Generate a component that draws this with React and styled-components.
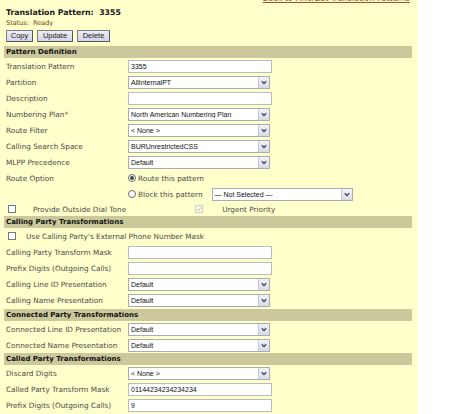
import React from 'react';
import styled, { createGlobalStyle } from 'styled-components';

const GlobalStyle = createGlobalStyle`
  body {
    margin: 0;
    background: #ffffff;
    font-family: 'DejaVu Sans', Verdana, sans-serif;
  }
`;

const Page = styled.div`
  width: 418px;
  height: 414px;
  overflow: hidden;
  background: #ffffcc;
`;

const TopLink = styled.div`
  display: flex;
  justify-content: flex-end;
  padding-right: 8px;
  margin-top: -6px;
  height: 13px;
  a {
    font-size: 8px;
    color: #a0522d;
    text-decoration: underline;
  }
`;

const Title = styled.div`
  padding-left: 6px;
  font-size: 7.8px;
  font-weight: bold;
  color: #1a1a1a;
  height: 11px;
  line-height: 11px;
`;

const Status = styled.div`
  padding-left: 6px;
  font-size: 6.5px;
  color: #6b4a10;
  height: 10px;
  line-height: 10px;
`;

const Toolbar = styled.div`
  display: flex;
  gap: 4px;
  padding: 2px 6px 0;
  height: 14px;
`;

const Button = styled.button`
  height: 12px;
  padding: 0 3px;
  font-family: 'Liberation Sans', Arial, sans-serif;
  font-size: 7.5px;
  color: #222;
  background: linear-gradient(#eeeef6, #d4d4e6);
  border: 1px solid #7d7d8a;
  border-right-color: #55556a;
  border-bottom-color: #55556a;
  border-radius: 1px;
  line-height: 10px;
  width: ${p => p.$w}px;
`;

const SectionHeader = styled.div`
  margin: ${p => p.$mt || 0}px 6px 0 4px;
  height: 12px;
  line-height: 12px;
  padding-left: 2px;
  background: #cbc99c;
  font-size: 7px;
  font-weight: bold;
  color: #111;
`;

const Row = styled.div`
  display: grid;
  grid-template-columns: 122px auto;
  align-items: center;
  height: ${p => p.$h || 16}px;
  padding-left: 6px;
`;

const Label = styled.span`
  font-size: 7.3px;
  color: #4a4a4a;
  white-space: nowrap;
`;

const TextBox = styled.div`
  box-sizing: border-box;
  width: 144px;
  height: 13px;
  background: #fff;
  border: 1px solid #b8bcc0;
  font-family: 'Liberation Sans', Arial, sans-serif;
  font-size: 7px;
  line-height: 11px;
  padding-left: 2px;
  color: #111;
`;

const SelectBox = styled.div`
  box-sizing: border-box;
  width: ${p => p.$w || 142}px;
  height: 13px;
  background: #fff;
  border: 1px solid #a8acb4;
  display: flex;
  align-items: center;
  font-family: 'Liberation Sans', Arial, sans-serif;
  font-size: 7px;
  color: #111;
`;

const SelectText = styled.span`
  flex: 1;
  padding-left: 2px;
  white-space: nowrap;
  overflow: hidden;
`;

const Arrow = styled.span`
  width: 10px;
  height: 11px;
  background: linear-gradient(#f2f2f8, #d8dae6);
  border-left: 1px solid #c4c6d0;
  display: flex;
  align-items: center;
  justify-content: center;
`;

const RadioLine = styled.div`
  display: flex;
  align-items: center;
  gap: 9px;
`;

const RadioLabel = styled.label`
  display: flex;
  align-items: center;
  gap: 2px;
  font-size: 7.3px;
  color: #4a4a4a;
`;

const Radio = styled.span`
  box-sizing: border-box;
  width: 8px;
  height: 8px;
  border-radius: 50%;
  border: 1px solid #6a6a6a;
  background: #fff;
  display: flex;
  align-items: center;
  justify-content: center;
  &::after {
    content: '';
    width: 4px;
    height: 4px;
    border-radius: 50%;
    background: ${p => (p.$on ? '#3c4a3c' : 'transparent')};
  }
`;

const CheckRow = styled.div`
  display: flex;
  align-items: center;
  height: ${p => p.$h || 16}px;
  padding-left: 8px;
`;

const Check = styled.span`
  box-sizing: border-box;
  width: 8px;
  height: 8px;
  border: 1px solid ${p => (p.$disabled ? '#d0d0c0' : '#6f7a86')};
  background: ${p => (p.$disabled ? '#f7f7ea' : '#fff')};
  display: flex;
  align-items: center;
  justify-content: center;
  margin-left: ${p => p.$ml || 0}px;
`;

const CheckText = styled.span`
  font-size: 7.3px;
  color: #4a4a4a;
  margin-left: ${p => p.$ml}px;
  white-space: nowrap;
`;

const Chevron = () => (
  <svg width="6" height="5" viewBox="0 0 6 5">
    <path d="M0.8 1.2 L3 3.6 L5.2 1.2" fill="none" stroke="#3a3f58" strokeWidth="1.3" />
  </svg>
);

const Tick = () => (
  <svg width="6" height="6" viewBox="0 0 6 6">
    <path d="M1 3 L2.5 4.5 L5 1.2" fill="none" stroke="#c0c0b0" strokeWidth="1" />
  </svg>
);

const Select = ({ value, w }) => (
  <SelectBox $w={w}>
    <SelectText>{value}</SelectText>
    <Arrow><Chevron /></Arrow>
  </SelectBox>
);

const Field = ({ label, children, h }) => (
  <Row $h={h}>
    <Label>{label}</Label>
    <div>{children}</div>
  </Row>
);

const App = () => (
  <Page>
    <GlobalStyle />
    <TopLink><a href="#">Back to Find/List Translation Patterns</a></TopLink>
    <Title>Translation Pattern:&nbsp; 3355</Title>
    <Status>Status:&nbsp; Ready</Status>
    <Toolbar>
      <Button $w={27}>Copy</Button>
      <Button $w={36}>Update</Button>
      <Button $w={33}>Delete</Button>
    </Toolbar>

    <SectionHeader $mt={2}>Pattern Definition</SectionHeader>
    <Field label="Translation Pattern"><TextBox>3355</TextBox></Field>
    <Field label="Partition"><Select value="AllInternalPT" /></Field>
    <Field label="Description"><TextBox /></Field>
    <Field label="Numbering Plan*"><Select value="North American Numbering Plan" /></Field>
    <Field label="Route Filter"><Select value="< None >" /></Field>
    <Field label="Calling Search Space"><Select value="BURUnrestrictedCSS" /></Field>
    <Field label="MLPP Precedence"><Select value="Default" /></Field>
    <Field label="Route Option">
      <RadioLabel><Radio $on />Route this pattern</RadioLabel>
    </Field>
    <Field label="">
      <RadioLine>
        <RadioLabel><Radio />Block this pattern</RadioLabel>
        <Select value="— Not Selected —" w={141} />
      </RadioLine>
    </Field>
    <CheckRow $h={14}>
      <Check />
      <CheckText $ml={17}>Provide Outside Dial Tone</CheckText>
      <Check $disabled $ml={69}><Tick /></Check>
      <CheckText $ml={19}>Urgent Priority</CheckText>
    </CheckRow>

    <SectionHeader>Calling Party Transformations</SectionHeader>
    <CheckRow>
      <Check />
      <CheckText $ml={10}>Use Calling Party's External Phone Number Mask</CheckText>
    </CheckRow>
    <Field label="Calling Party Transform Mask"><TextBox /></Field>
    <Field label="Prefix Digits (Outgoing Calls)"><TextBox /></Field>
    <Field label="Calling Line ID Presentation"><Select value="Default" /></Field>
    <Field label="Calling Name Presentation"><Select value="Default" /></Field>

    <SectionHeader $mt={1}>Connected Party Transformations</SectionHeader>
    <Field label="Connected Line ID Presentation"><Select value="Default" /></Field>
    <Field label="Connected Name Presentation"><Select value="Default" /></Field>

    <SectionHeader>Called Party Transformations</SectionHeader>
    <Field label="Discard Digits"><Select value="< None >" /></Field>
    <Field label="Called Party Transform Mask"><TextBox>01144234234234234</TextBox></Field>
    <Field label="Prefix Digits (Outgoing Calls)"><TextBox>9</TextBox></Field>
  </Page>
);

export default App;
